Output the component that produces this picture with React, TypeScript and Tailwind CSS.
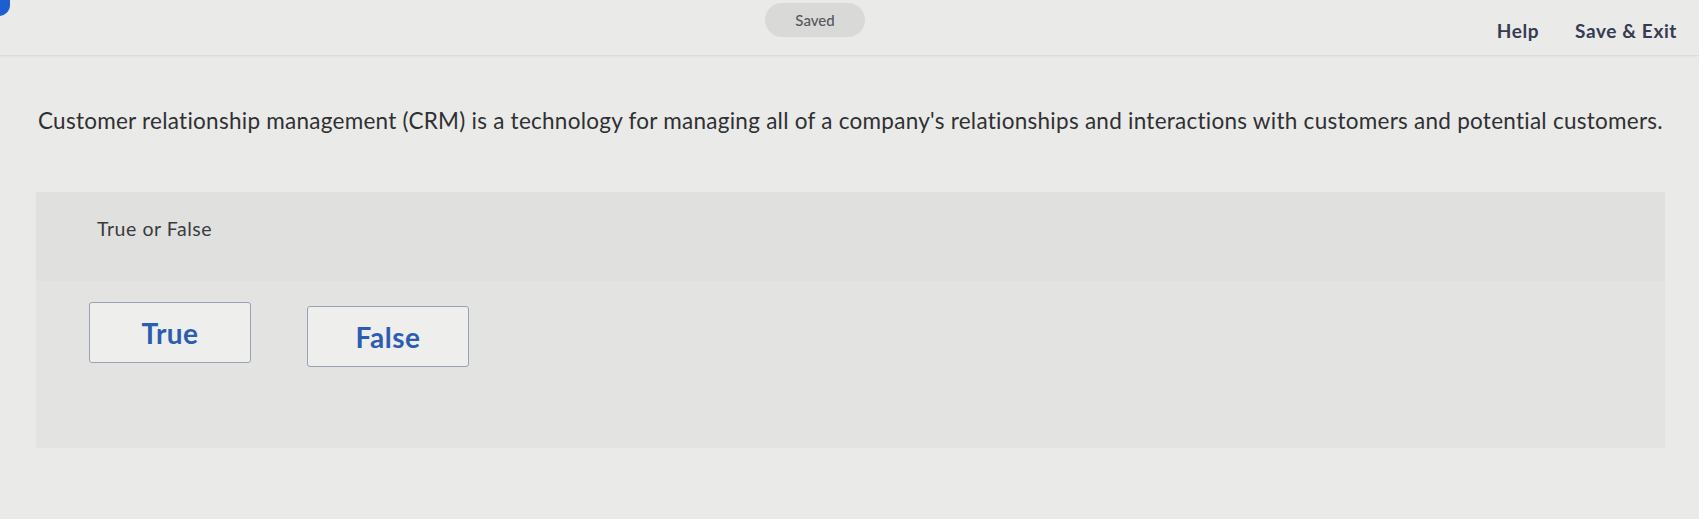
import React from 'react';

export default function App() {
  return (
    <div
      className="relative w-[1699px] h-[519px] overflow-hidden bg-[#eaeae8] text-[#2f3033]"
      style={{ fontFamily: 'Lato, "Open Sans", sans-serif' }}
    >
      {/* cut-off logo in the corner */}
      <div className="absolute -left-[12px] -top-[10px] w-[22px] h-[26px] rounded-full bg-[#1d5fd1]" />

      <header className="flex items-start h-[56px] border-b border-[#dcdcda] shadow-[0_1px_2px_rgba(0,0,0,0.04)]">
        <div className="ml-[765px] mt-[3px] h-[34px] w-[100px] rounded-full bg-[#d9d9d7] flex items-center justify-center text-[15px] font-medium text-[#55575c]">
          Saved
        </div>
        <nav className="ml-auto mr-[22px] mt-[17px] flex items-center gap-[36px] text-[19px] tracking-[0.6px] font-bold text-[#363a52]">
          <span>Help</span>
          <span>Save &amp; Exit</span>
        </nav>
      </header>

      <p className="mt-[51px] ml-[38px] text-[22.5px] leading-[28px] tracking-[0.26px]">
        Customer relationship management (CRM) is a technology for managing all of a company's relationships and interactions with customers and potential customers.
      </p>

      <section className="mt-[57px] ml-[36px] w-[1629px] h-[256px] bg-[#e3e3e1] rounded-[3px] flex flex-col">
        <div className="h-[89px] px-[61px] pt-[22px] text-[19.5px] tracking-[0.55px] text-[#3a3b3e] bg-[#e0e0de]">
          True or False
        </div>
        <div className="flex items-start gap-[56px] pl-[53px] pt-[21px]">
          <button className="w-[162px] h-[61px] rounded-[3px] border border-[#98a2b6] bg-[#eeeeec] text-[28px] tracking-[0.5px] font-bold text-[#2c5db0]">
            True
          </button>
          <button className="mt-[4px] w-[162px] h-[61px] rounded-[3px] border border-[#98a2b6] bg-[#eeeeec] text-[28px] tracking-[0.5px] font-bold text-[#2c5db0]">
            False
          </button>
        </div>
      </section>
    </div>
  );
}
